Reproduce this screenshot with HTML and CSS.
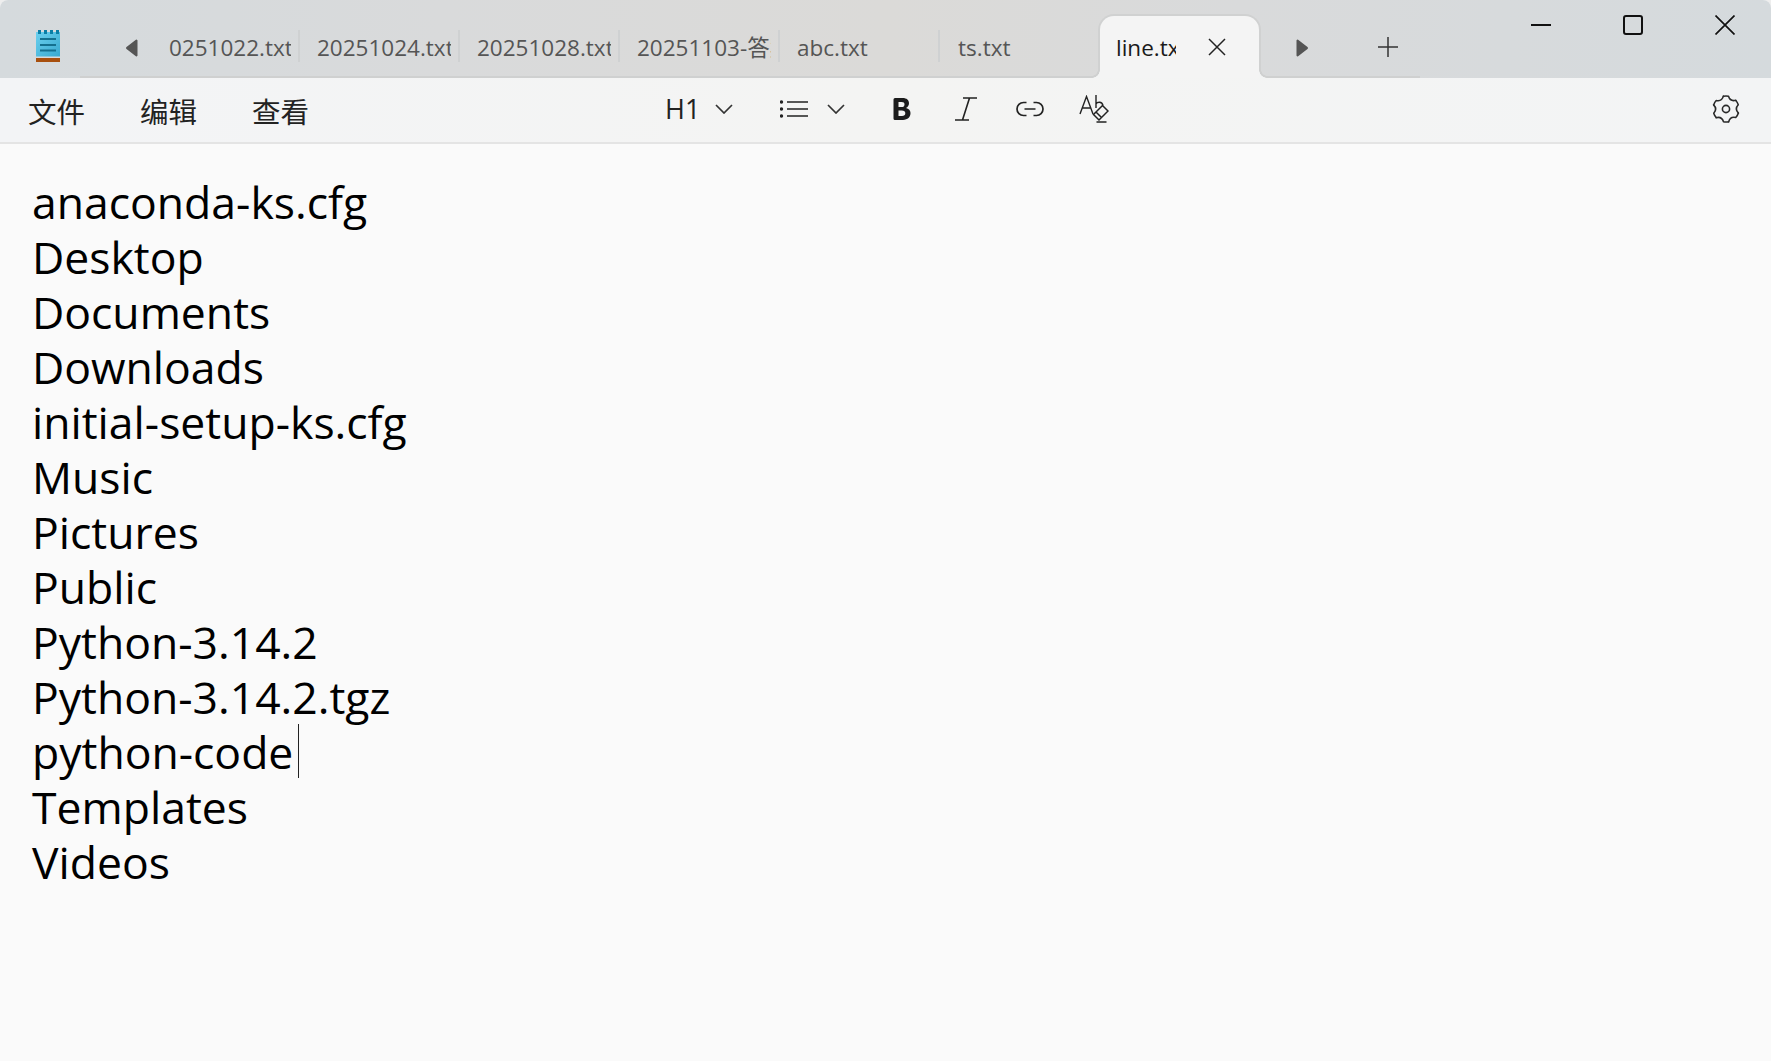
FILE: index.html
```html
<!DOCTYPE html>
<html lang="zh">
<head>
<meta charset="utf-8">
<title>line.txt - Notepad</title>
<link rel="stylesheet" href="styles.css">
</head>
<body>
<div class="window">
  <header class="titlebar">
    <svg class="app-icon" width="24" height="32" viewBox="0 0 24 32">
      <defs><linearGradient id="pad" x1="0" y1="0" x2="1" y2="1"><stop offset="0" stop-color="#6bd0ef"/><stop offset="1" stop-color="#38a9cf"/></linearGradient></defs>
      <rect x="0" y="2" width="24" height="24.5" fill="url(#pad)"/>
      <rect x="2" y="0" width="3" height="4" fill="#0a7ea6"/><rect x="8" y="0" width="3" height="4" fill="#0a7ea6"/><rect x="14" y="0" width="3" height="4" fill="#0a7ea6"/><rect x="20" y="0" width="3" height="4" fill="#0a7ea6"/>
      <path d="M4 9h16M4 15h16M4 20.5h16" stroke="#14708f" stroke-width="2"/>
      <rect x="0" y="28" width="24" height="4" fill="#a8500f"/>
    </svg>
    <div class="strip">
      <svg class="scroll-left" width="14" height="18" viewBox="0 0 14 18"><path d="M12.5 1.5v15a1 1 0 0 1-1.6.7L1.5 10a1.3 1.3 0 0 1 0-2l9.400-7.200a1 1 0 0 1 1.600.7z" fill="#555"/></svg>
      <div class="tab first"><span class="tab-label">0251022.txt</span></div>
      <div class="tab"><span class="tab-label">20251024.txt</span></div>
      <div class="tab"><span class="tab-label">20251028.txt</span></div>
      <div class="tab"><span class="tab-label">20251103-答案.txt</span></div>
      <div class="tab"><span class="tab-label">abc.txt</span></div>
      <div class="tab last"><span class="tab-label">ts.txt</span></div>
      <div class="tab-active">
        <span class="active-label">line.txt</span>
        <svg class="tab-close" width="18" height="18" viewBox="0 0 18 18"><path d="M1 1l16 16M17 1L1 17" stroke="#222" stroke-width="1.500" fill="none"/></svg>
      </div>
      <div class="strip-end">
        <svg class="scroll-right" width="14" height="18" viewBox="0 0 14 18"><path d="M1.500 1.500v15a1 1 0 0 0 1.600.7L12.500 10a1.300 1.300 0 0 0 0-2L3.100.8a1 1 0 0 0-1.600.7z" fill="#555"/></svg>
        <svg class="new-tab" width="20" height="20" viewBox="0 0 20 20"><path d="M10 0v20M0 10h20" stroke="#333" stroke-width="1.500"/></svg>
      </div>
    </div>
    <div class="controls">
      <svg width="20" height="20" viewBox="0 0 20 20"><path d="M0 10h20" stroke="#111" stroke-width="2"/></svg>
      <svg width="20" height="20" viewBox="0 0 20 20"><rect x="1" y="1" width="18" height="18" rx="2" fill="none" stroke="#111" stroke-width="2"/></svg>
      <svg width="20" height="20" viewBox="0 0 20 20"><path d="M.5.500l19 19M19.500.500l-19 19" stroke="#111" stroke-width="1.700"/></svg>
    </div>
  </header>
  <nav class="toolbar">
    <div class="menus">
      <span class="menu">文件</span>
      <span class="menu">编辑</span>
      <span class="menu">查看</span>
    </div>
    <div class="format">
      <div class="dropdown heading">
        <span class="h1-label">H1</span>
        <svg class="chev" width="18" height="10" viewBox="0 0 18 10"><path d="M1 1l8 8 8-8" fill="none" stroke="#333" stroke-width="1.700"/></svg>
      </div>
      <div class="dropdown list">
        <svg width="28" height="18" viewBox="0 0 28 18"><circle cx="1.500" cy="2" r="1.700" fill="#222"/><circle cx="1.500" cy="9" r="1.700" fill="#222"/><circle cx="1.500" cy="16" r="1.700" fill="#222"/><path d="M7 2h21M7 9h21M7 16h21" stroke="#222" stroke-width="1.600"/></svg>
        <svg class="chev" width="18" height="10" viewBox="0 0 18 10"><path d="M1 1l8 8 8-8" fill="none" stroke="#333" stroke-width="1.700"/></svg>
      </div>
      <svg class="ico-bold" width="18" height="24" viewBox="0 0 18 24"><path d="M.5 2.500A1.500 1.500 0 0 1 2 1h7.500c4.400 0 6.500 2.200 6.500 5.300 0 2.200-1.200 3.900-3 4.600 2.800.5 4.500 2.400 4.500 5.200 0 3.900-2.700 6.900-7.500 6.900H2A1.500 1.500 0 0 1 .5 21.500zM5.500 5v5h3c2 0 3-1 3-2.600C11.500 5.800 10.500 5 8.600 5zm0 8.500V19h3.500c2.200 0 3.300-1 3.300-2.800 0-1.800-1.200-2.700-3.500-2.700z" fill="#1c1c1c" fill-rule="evenodd"/></svg>
      <svg class="ico-italic" width="22" height="24" viewBox="0 0 22 24"><path d="M8 1h14M0 23h14M14.500 1L7.500 23" fill="none" stroke="#222" stroke-width="1.600"/></svg>
      <svg class="ico-link" width="28" height="16" viewBox="0 0 28 16"><path d="M10.500 1.500H7.500a6.500 6.500 0 0 0 0 13h3M17.500 1.500h3a6.500 6.500 0 0 1 0 13h-3M8.500 8h11" fill="none" stroke="#222" stroke-width="1.700"/></svg>
      <svg class="ico-ab" width="30" height="28" viewBox="0 0 30 28"><path d="M1 19L7.500 1.500 14 19M3.500 13h8M17 0v13M17 9c1-2 6-3 7 1.500" fill="none" stroke="#222" stroke-width="1.400"/><path d="M23.500 10.500l5.500 5.500-9 9-5.500-5.500zM17 17l5.500 5.500M17.500 27h10" fill="#f4f4f3" stroke="#222" stroke-width="1.500"/></svg>
    </div>
    <svg class="gear" width="28" height="28" viewBox="0 0 28 28">
      <g fill="none" stroke="#2a2a2a" stroke-width="1.600" stroke-linecap="round" stroke-linejoin="round">
        <path d="M11.500 1.300Q14 .7 16.500 1.300Q18.300 6.800 23.800 5.300"/>
        <path transform="rotate(60 14 14)" d="M11.500 1.300Q14 .7 16.500 1.300Q18.300 6.800 23.800 5.300"/>
        <path transform="rotate(120 14 14)" d="M11.500 1.300Q14 .7 16.500 1.300Q18.300 6.800 23.800 5.300"/>
        <path transform="rotate(180 14 14)" d="M11.500 1.300Q14 .7 16.500 1.300Q18.300 6.800 23.800 5.300"/>
        <path transform="rotate(240 14 14)" d="M11.500 1.300Q14 .7 16.500 1.300Q18.300 6.800 23.800 5.300"/>
        <path transform="rotate(300 14 14)" d="M11.500 1.300Q14 .7 16.500 1.300Q18.300 6.800 23.800 5.300"/>
        <circle cx="14" cy="14" r="3.600"/>
      </g>
    </svg>
  </nav>
  <main class="editor">
    <div class="line">anaconda-ks.cfg</div>
    <div class="line">Desktop</div>
    <div class="line">Documents</div>
    <div class="line">Downloads</div>
    <div class="line">initial-setup-ks.cfg</div>
    <div class="line">Music</div>
    <div class="line">Pictures</div>
    <div class="line">Public</div>
    <div class="line">Python-3.14.2</div>
    <div class="line">Python-3.14.2.tgz</div>
    <div class="line caret">python-code</div>
    <div class="line">Templates</div>
    <div class="line">Videos</div>
  </main>
</div>
</body>
</html>
```
FILE: styles.css
```css
* { box-sizing: border-box; }
html, body { height: 100%; }
body {
  margin: 0;
  background: #eeeeee;
  overflow: hidden;
  font-family: "Open Sans", "Noto Sans", "Noto Sans CJK SC", sans-serif;
}
.window {
  height: 1061px;
  display: flex;
  flex-direction: column;
  border-radius: 8px 8px 0 0;
  overflow: hidden;
  background: #fafafa;
}
.titlebar {
  height: 78px;
  flex: none;
  display: flex;
  background: linear-gradient(90deg, #d5dadd 0%, #d9dadb 25%, #dbdad8 50%, #d9dadb 70%, #d5dadd 100%);
}
.app-icon { margin: 30px 0 0 36px; flex: none; }
.strip {
  width: 1340px;
  margin-left: 20px;
  height: 78px;
  display: flex;
  flex: none;
  border-bottom: 2px solid #cfd0d0;
}
.scroll-left { margin: 39px 0 0 45px; flex: none; }
.tab {
  width: 160px;
  height: 32px;
  margin-top: 30px;
  padding-left: 17px;
  white-space: nowrap;
  border-right: 2px solid #cfd1d2;
  font-size: 22.500px;
  line-height: 35px;
  color: #555;
  flex: none;
}
.tab.first { width: 131px; padding-left: 0; margin-left: 30px; }
.tab.last { border-right: 0; width: 158px; padding-left: 18px; }
.tab-label { display: block; overflow: hidden; margin-right: 7px; }
.tab-active {
  width: 163px;
  height: 64px;
  margin-top: 14px;
  margin-bottom: -2px;
  padding: 16px 0 0 16px;
  display: flex;
  flex: none;
  background: #f4f4f4;
  border: 2px solid #d0d1d1;
  border-bottom: 0;
  border-radius: 16px 16px 0 0;
  position: relative;
}
.tab-active::before,
.tab-active::after {
  content: "";
  position: absolute;
  bottom: 0;
  width: 8px;
  height: 8px;
}
.tab-active::before {
  left: -8px;
  background: radial-gradient(circle at 0 0, transparent 5.500px, #cfd0d0 6px, #cfd0d0 7.500px, #f3f4f4 8px);
}
.tab-active::after {
  right: -8px;
  background: radial-gradient(circle at 100% 0, transparent 5.500px, #cfd0d0 6px, #cfd0d0 7.500px, #f3f4f4 8px);
}
.active-label {
  display: block;
  width: 60px;
  overflow: hidden;
  white-space: nowrap;
  font-size: 22.500px;
  line-height: 32px;
  color: #1a1a1a;
}
.tab-close { margin: 6px 0 0 32px; }
.strip-end { display: flex; flex: none; }
.scroll-right { margin: 39px 0 0 34px; }
.new-tab { margin: 37px 0 0 69px; }
.controls {
  display: flex;
  gap: 72px;
  margin-left: auto;
  padding: 15px 36px 0 0;
}
.toolbar {
  height: 66px;
  flex: none;
  display: flex;
  align-items: center;
  padding: 0 31px 3px 28px;
  background: linear-gradient(90deg, #f3f4f6 0%, #f4f4f3 50%, #f3f4f5 100%);
  border-bottom: 2px solid #e4e4e4;
}
.menus { display: flex; gap: 55px; width: 637px; flex: none; font-size: 28.500px; color: #222; margin-top: 4px; }
.menu { font-family: "Noto Sans CJK SC", sans-serif; line-height: 40px; }
.format { display: flex; align-items: center; }
.dropdown { display: flex; align-items: center; }
.h1-label { font-size: 27px; line-height: 40px; font-weight: 400; color: #222; font-family: "Open Sans", sans-serif; width: 50px; }
.heading { width: 115px; }
.list { width: 113px; gap: 19px; }
.ico-italic { margin-left: 44px; }
.ico-link { margin-left: 39px; }
.ico-ab { margin-left: 35px; }
.gear { margin-left: auto; flex: none; }
.editor {
  flex: 1;
  padding: 30px 0 0 32px;
  background: #fafafa;
  color: #000;
  font-size: 44.500px;
  line-height: 55px;
}
.line { white-space: nowrap; height: 55px; }
.caret::after {
  content: "";
  display: inline-block;
  width: 1px;
  height: 54px;
  margin-left: 5px;
  background: #222;
  vertical-align: top;
}
```
